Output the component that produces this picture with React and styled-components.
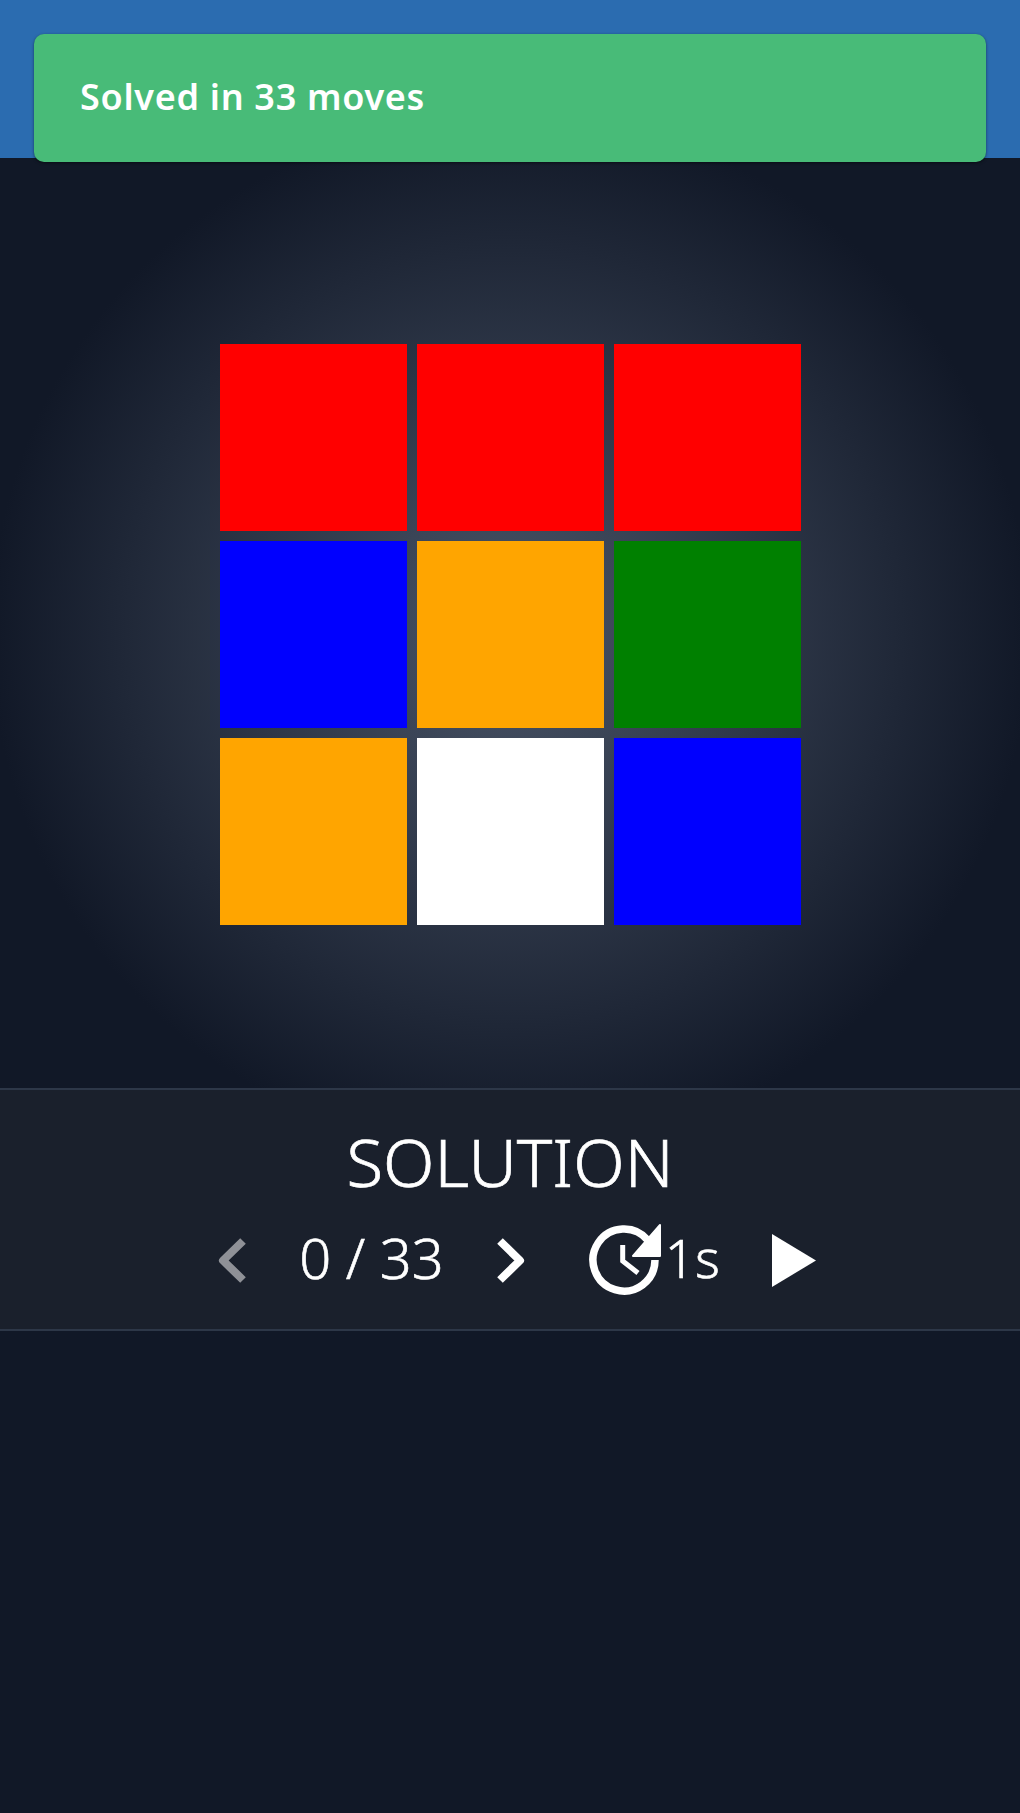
import React from 'react';
import styled, { createGlobalStyle } from 'styled-components';

const GlobalStyle = createGlobalStyle`
  html, body {
    margin: 0;
    background: #111827;
    font-family: "Noto Sans", sans-serif;
    color: #fff;
  }
`;

const tiles = ['red', 'red', 'red', 'blue', 'orange', 'green', 'orange', 'white', 'blue'];

export default function App() {
  return (
    <Page>
      <GlobalStyle />
      <Header />
      <Toast>Solved in 33 moves</Toast>
      <Stage>
        <Board>
          {tiles.map((color, i) => <Tile key={i} $color={color} />)}
        </Board>
      </Stage>
      <Panel>
        <Title>SOLUTION</Title>
        <Controls>
          <ArrowButton $disabled aria-label="Previous">
            <svg viewBox="0 0 33 47" width="33" height="47">
              <path d="M27 4 L7 23.5 L27 43" fill="none" stroke="currentColor" strokeWidth="8" strokeLinejoin="round" />
            </svg>
          </ArrowButton>
          <Counter>0 / 33</Counter>
          <ArrowButton aria-label="Next">
            <svg viewBox="0 0 33 47" width="33" height="47">
              <path d="M6 4 L26 23.5 L6 43" fill="none" stroke="currentColor" strokeWidth="8" strokeLinejoin="round" />
            </svg>
          </ArrowButton>
          <SpeedIcon viewBox="7 9 72 72" width="72" height="72" aria-hidden="true">
            <path d="M66 24.4 A31 31 0 1 0 73 44" fill="none" stroke="currentColor" strokeWidth="7.5" />
            <path d="M78 9 L78 40 L51 40 Z" fill="currentColor" stroke="currentColor" strokeWidth="2" strokeLinejoin="round" />
            <path d="M40.7 29 V45 L56 57" fill="none" stroke="currentColor" strokeWidth="5" />
          </SpeedIcon>
          <Speed>1s</Speed>
          <PlayButton aria-label="Play">
            <svg viewBox="0 0 44 53" width="44" height="53">
              <path d="M0 0 L44 26.5 L0 53 Z" fill="currentColor" />
            </svg>
          </PlayButton>
        </Controls>
      </Panel>
    </Page>
  );
}

const Page = styled.div`
  position: relative;
  min-height: 1813px;
  background: #111827;
  overflow: hidden;
`;

const Header = styled.header`
  height: 158px;
  background: #2b6cb0;
`;

const Toast = styled.div`
  position: absolute;
  top: 34px;
  left: 34px;
  right: 34px;
  height: 128px;
  box-sizing: border-box;
  display: flex;
  align-items: center;
  padding: 0 46px 3px;
  border-radius: 10px;
  background: #48bb78;
  box-shadow: 0 1px 3px rgba(0, 0, 0, 0.5);
  font-size: 36px;
  font-weight: 600;
  letter-spacing: 0.7px;
`;

const Stage = styled.main`
  height: 930px;
  box-sizing: border-box;
  padding-top: 186px;
  display: flex;
  justify-content: center;
  background: radial-gradient(circle 520px at 50% 476px, #4a5568 0%, #111827 100%);
`;

const Board = styled.div`
  display: grid;
  grid-template-columns: repeat(3, 187px);
  grid-auto-rows: 187px;
  gap: 10px;
  height: max-content;
`;

const Tile = styled.div`
  background: ${(p) => p.$color};
  filter: blur(0.6px);
`;

const Panel = styled.section`
  height: 243px;
  box-sizing: border-box;
  display: flex;
  flex-direction: column;
  align-items: center;
  padding-top: 33px;
  background: #1a202c;
  border-top: 2px solid #2d3748;
  border-bottom: 2px solid #2d3748;
`;

const Title = styled.h2`
  margin: 0;
  font-size: 67px;
  line-height: 76px;
  font-weight: 300;
  -webkit-text-stroke: 0.7px #fff;
`;

const Controls = styled.div`
  display: flex;
  align-items: center;
  height: 72px;
  margin-top: 25px;
  margin-left: 12px;
`;

const ArrowButton = styled.button`
  display: flex;
  padding: 0;
  border: 0;
  background: none;
  color: ${(p) => (p.$disabled ? '#8f9197' : '#fff')};
`;

const Counter = styled.span`
  margin: -6px 50.5px 0;
  font-size: 56px;
  font-weight: 300;
  -webkit-text-stroke: 0.6px #fff;
`;

const SpeedIcon = styled.svg`
  margin-left: 62px;
  margin-top: 2px;
  color: #fff;
  overflow: visible;
`;

const Speed = styled.span`
  margin-left: 3.5px;
  margin-top: -6px;
  font-size: 53px;
  font-weight: 300;
  -webkit-text-stroke: 0.6px #fff;
`;

const PlayButton = styled.button`
  display: flex;
  margin-left: 52.5px;
  padding: 0;
  border: 0;
  background: none;
  color: #fff;
`;
